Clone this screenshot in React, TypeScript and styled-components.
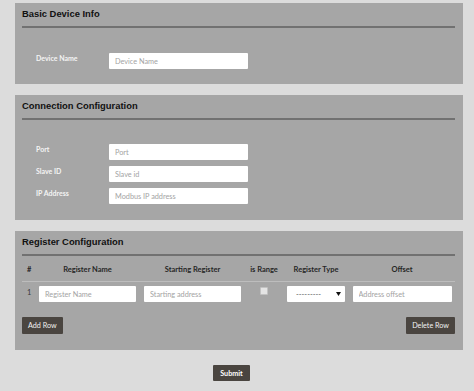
import React from 'react'
import styled, { createGlobalStyle } from 'styled-components'

const GlobalStyle = createGlobalStyle`
    html, body {
        margin: 0;
        padding: 0;
        background: #dcdcdc;
    }
    body {
        font-family: "Lato", "Open Sans", sans-serif;
    }
`

const Page = styled.div`
    width: 448px;
    padding: 3px 11px 9px 15px;
`

const Panel = styled.section<{ $bottom?: number }>`
    background: #a6a6a6;
    padding: 4px 8px ${p => p.$bottom ?? 15}px 7px;
    margin-bottom: 11px;
    &:last-of-type {
        margin-bottom: 0;
    }
`

const Heading = styled.h2`
    margin: 0;
    font-family: "Liberation Sans", Arial, sans-serif;
    font-size: 9.4px;
    line-height: 13px;
    font-weight: 700;
    color: #111;
    padding-bottom: 6px;
    border-bottom: 2px solid #717171;
`

const Fields = styled.div<{ $top: number }>`
    display: flex;
    flex-direction: column;
    gap: 6px;
    margin-top: ${p => p.$top}px;
`

const FieldRow = styled.div`
    display: flex;
    align-items: flex-start;
`

const Label = styled.label`
    width: 73px;
    padding-left: 14px;
    font-size: 7px;
    line-height: 10px;
    font-weight: 700;
    color: #f4f4f4;
`

const TextInput = styled.input<{ $w?: number }>`
    box-sizing: border-box;
    width: ${p => p.$w ?? 139}px;
    height: 16px;
    border: none;
    border-radius: 1px;
    background: #fff;
    padding: 0 6px;
    font-family: "Lato", "Open Sans", sans-serif;
    font-size: 7.3px;
    color: #333;
    outline: none;
    &::placeholder {
        color: #a3a3a3;
    }
`

const Grid = styled.div`
    display: grid;
    grid-template-columns: 13px 105px 105px 38px 66px 106px;
`

const HeadCell = styled.div<{ $left?: boolean }>`
    height: 26px;
    display: flex;
    align-items: flex-end;
    justify-content: ${p => (p.$left ? 'flex-start' : 'center')};
    padding: 0 0 6px ${p => (p.$left ? '5px' : '0')};
    box-sizing: border-box;
    border-bottom: 1px solid #bdbdbd;
    font-size: 7.5px;
    line-height: 10px;
    font-weight: 700;
    color: #262626;
    white-space: nowrap;
`

const Cell = styled.div<{ $left?: boolean }>`
    display: flex;
    justify-content: ${p => (p.$left ? 'flex-start' : 'center')};
    align-items: flex-start;
    padding: 4px 0 4px ${p => (p.$left ? '5px' : '0')};
    font-size: 7.5px;
    line-height: 14px;
    color: #3a3a3a;
`

const CheckBox = styled.span`
    display: block;
    width: 6px;
    height: 6px;
    margin-top: 1px;
    background: #e4e4e4;
    border: 1px solid #c2c2c2;
    border-radius: 1px;
`

const SelectWrap = styled.div`
    position: relative;
    width: 58px;
    height: 16px;
`

const Select = styled.select`
    appearance: none;
    box-sizing: border-box;
    width: 100%;
    height: 100%;
    border: none;
    border-radius: 1px;
    background: #fff;
    padding: 0 0 0 9px;
    font-family: "Lato", "Open Sans", sans-serif;
    font-size: 7.5px;
    color: #555;
    outline: none;
`

const Caret = styled.svg`
    position: absolute;
    right: 4px;
    top: 6px;
    pointer-events: none;
`

const ButtonRow = styled.div`
    display: flex;
    justify-content: space-between;
    margin-top: 11px;
`

const Button = styled.button`
    height: 17px;
    padding: 0 6px;
    border: none;
    border-radius: 1px;
    background: #4a4540;
    color: #f2f2f2;
    font-family: "Lato", "Open Sans", sans-serif;
    font-size: 7.2px;
    cursor: pointer;
`

const Footer = styled.div`
    display: flex;
    justify-content: center;
    padding-right: 15px;
    margin-top: 15px;
`

const SubmitButton = styled(Button)`
    height: 16px;
    width: 37px;
    padding: 0;
    font-weight: 700;
    color: #fff;
`

const columns = ['Register Name', 'Starting Register', 'is Range', 'Register Type', 'Offset']

const App = () => {
    return (
        <>
            <GlobalStyle />
            <Page>
                <Panel $bottom={15}>
                    <Heading>Basic Device Info</Heading>
                    <Fields $top={25}>
                        <FieldRow>
                            <Label>Device Name</Label>
                            <TextInput placeholder='Device Name' />
                        </FieldRow>
                    </Fields>
                </Panel>

                <Panel $bottom={16}>
                    <Heading>Connection Configuration</Heading>
                    <Fields $top={24}>
                        <FieldRow>
                            <Label>Port</Label>
                            <TextInput placeholder='Port' />
                        </FieldRow>
                        <FieldRow>
                            <Label>Slave ID</Label>
                            <TextInput placeholder='Slave id' />
                        </FieldRow>
                        <FieldRow>
                            <Label>IP Address</Label>
                            <TextInput placeholder='Modbus IP address' />
                        </FieldRow>
                    </Fields>
                </Panel>

                <Panel $bottom={16}>
                    <Heading>Register Configuration</Heading>
                    <Grid>
                        <HeadCell $left>#</HeadCell>
                        {columns.map(c => (
                            <HeadCell key={c}>{c}</HeadCell>
                        ))}

                        <Cell $left>1</Cell>
                        <Cell><TextInput $w={97} placeholder='Register Name' /></Cell>
                        <Cell><TextInput $w={97} placeholder='Starting address' /></Cell>
                        <Cell><CheckBox /></Cell>
                        <Cell>
                            <SelectWrap>
                                <Select defaultValue=''>
                                    <option value=''>---------</option>
                                </Select>
                                <Caret width='5' height='4' viewBox='0 0 5 4'>
                                    <path d='M0 0H5L2.5 4Z' fill='#111' />
                                </Caret>
                            </SelectWrap>
                        </Cell>
                        <Cell><TextInput $w={99} placeholder='Address offset' /></Cell>
                    </Grid>
                    <ButtonRow>
                        <Button>Add Row</Button>
                        <Button>Delete Row</Button>
                    </ButtonRow>
                </Panel>

                <Footer>
                    <SubmitButton>Submit</SubmitButton>
                </Footer>
            </Page>
        </>
    )
}

export default App
